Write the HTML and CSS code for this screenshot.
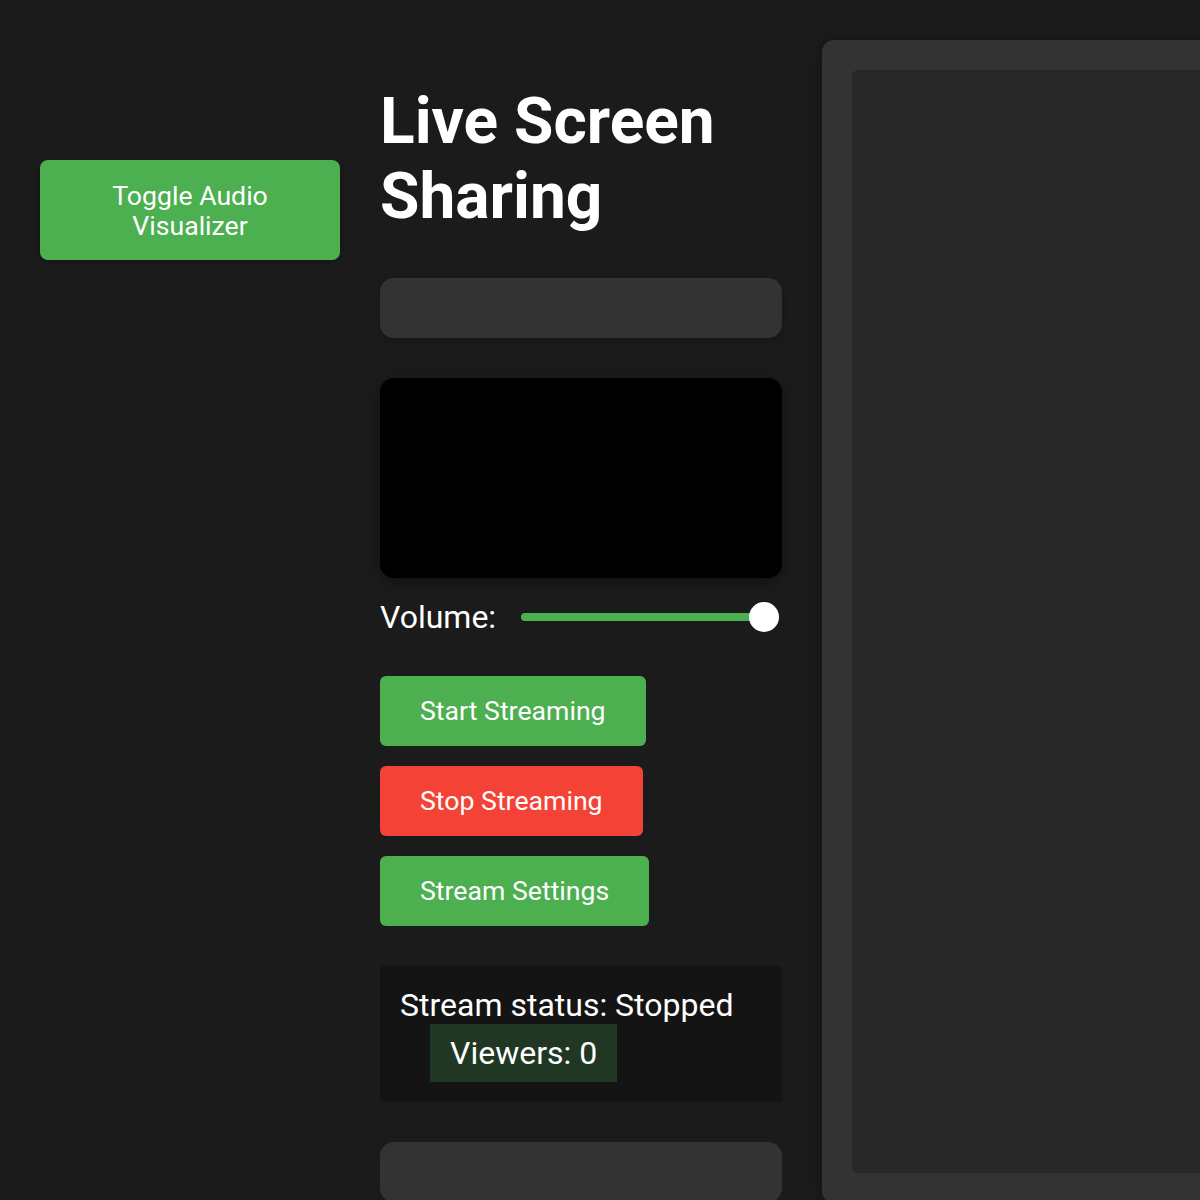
FILE: index.html
```html
<!DOCTYPE html>
<html lang="en">
<head>
  <meta charset="UTF-8">
  <meta name="viewport" content="width=device-width, initial-scale=1.0">
  <title>Live Screen Sharing</title>
  <link rel="stylesheet" href="styles.css">
</head>
<body>
  <div class="layout">
    <!-- Left column -->
    <div class="sidebar">
      <button class="btn btn-toggle" id="toggle-visualizer">Toggle Audio Visualizer</button>
    </div>

    <!-- Main column -->
    <div class="main">
      <h1>Live Screen Sharing</h1>

      <input type="text" class="stream-title" id="stream-title" aria-label="Stream title">

      <div class="video-box" id="preview"></div>

      <div class="volume-row">
        <label for="volume">Volume:</label>
        <input type="range" id="volume" class="volume-slider" min="0" max="100" value="100">
      </div>

      <div class="controls">
        <button class="btn btn-green" id="start-stream">Start Streaming</button>
        <button class="btn btn-red" id="stop-stream">Stop Streaming</button>
        <button class="btn btn-green" id="stream-settings">Stream Settings</button>
      </div>

      <div class="status-box">
        <div class="status-text">Stream status: Stopped</div>
        <div class="viewers">Viewers: 0</div>
      </div>

      <div class="chat-bar"></div>
    </div>

    <!-- Right panel (runs off the right edge) -->
    <div class="panel">
      <div class="panel-inner"></div>
    </div>
  </div>
</body>
</html>
```

FILE: styles.css
```css
:root {
  --bg: #1b1b1b;
  --surface: #333333;
  --surface-dark: #141414;
  --green: #4caf50;
  --red: #f44336;
  --text: #ffffff;
}

* {
  box-sizing: border-box;
}

html, body {
  margin: 0;
  padding: 0;
  height: 100%;
  overflow: hidden;
}

body {
  background-color: var(--bg);
  color: var(--text);
  font-family: Roboto, 'Liberation Sans', sans-serif;
}

.layout {
  display: flex;
  align-items: flex-start;
  gap: 40px;
  padding: 40px 0 40px 40px;
}

/* Left column */
.sidebar {
  flex: none;
  width: 300px;
  padding-top: 120px;
}

.btn {
  border: none;
  color: var(--text);
  font-family: Roboto, 'Liberation Sans', sans-serif;
  font-size: 26.67px;
  padding: 19px 40px;
  border-radius: 6px;
  cursor: pointer;
}

.btn-toggle {
  display: flex;
  align-items: center;
  justify-content: center;
  width: 300px;
  height: 100px;
  padding: 2px 20px 0;
  background-color: var(--green);
  border-radius: 8px;
  line-height: 30px;
  box-shadow: 0 2px 8px rgba(0, 0, 0, 0.25);
}

.btn-green {
  background-color: var(--green);
}

.btn-red {
  background-color: var(--red);
}

/* Main column */
.main {
  flex: none;
  width: 402px;
  display: flex;
  flex-direction: column;
}

h1 {
  font-size: 64px;
  font-weight: 700;
  line-height: 75px;
  margin: 44px 0;
}

.stream-title {
  display: block;
  width: 100%;
  height: 60px;
  border: none;
  border-radius: 14px;
  background-color: var(--surface);
  box-shadow: 0 2px 8px rgba(0, 0, 0, 0.2);
  outline: none;
  margin-bottom: 40px;
}

.video-box {
  height: 200px;
  background-color: #000;
  border-radius: 14px;
  box-shadow: 0 4px 14px rgba(0, 0, 0, 0.35);
  margin-bottom: 20px;
}

.volume-row {
  display: flex;
  align-items: center;
  gap: 25px;
  height: 38px;
  font-size: 32px;
  margin-bottom: 40px;
}

.volume-slider {
  -webkit-appearance: none;
  appearance: none;
  width: 258px;
  height: 30px;
  margin: 0;
  background: transparent;
}

.volume-slider::-webkit-slider-runnable-track {
  height: 8px;
  border-radius: 4px;
  background-color: var(--green);
}

.volume-slider::-webkit-slider-thumb {
  -webkit-appearance: none;
  width: 30px;
  height: 30px;
  margin-top: -11px;
  border-radius: 50%;
  background-color: #fff;
  border: none;
}

.controls {
  display: flex;
  flex-direction: column;
  align-items: flex-start;
  gap: 20px;
  margin-bottom: 40px;
}

.status-box {
  background-color: var(--surface-dark);
  border-radius: 4px;
  padding: 20px;
  font-size: 32px;
  margin-bottom: 40px;
}

.viewers {
  display: inline-block;
  margin-left: 30px;
  padding: 10px 20px;
  background-color: #203823;
}

.chat-bar {
  height: 60px;
  border-radius: 14px;
  background-color: var(--surface);
}

/* Right panel */
.panel {
  flex: 1;
  min-width: 0;
  padding: 30px 0 30px 30px;
  background-color: var(--surface);
  border-radius: 12px 0 0 12px;
  box-shadow: 0 0 14px rgba(0, 0, 0, 0.3);
}

.panel-inner {
  height: 1103px;
  background-color: #282828;
  border-radius: 6px 0 0 6px;
}
```
